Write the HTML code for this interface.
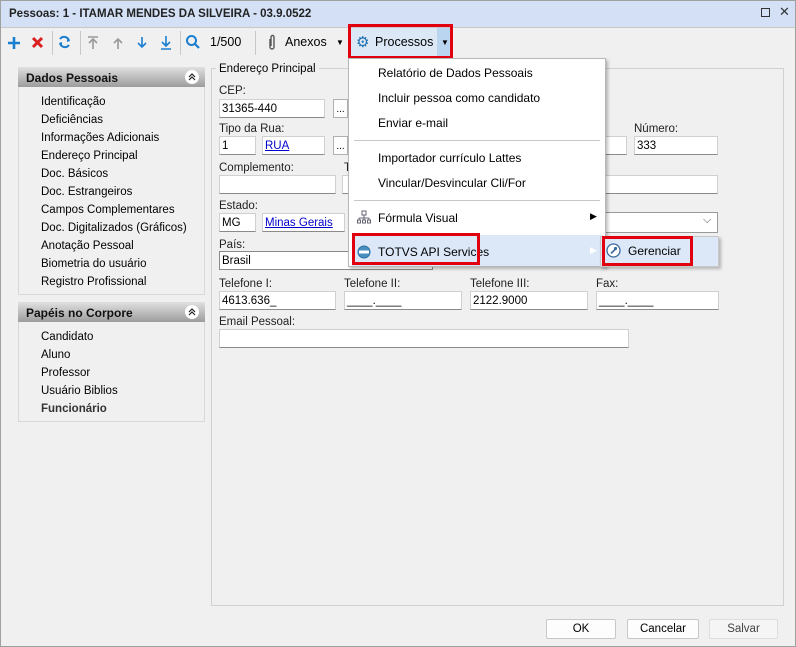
<!DOCTYPE html>
<html><head><meta charset="utf-8"><style>
*{box-sizing:border-box;margin:0;padding:0}
body{width:796px;height:647px;overflow:hidden;background:#f0f0f0;font-family:"Liberation Sans",sans-serif;font-size:11.5px;color:#000;position:relative}
.a{position:absolute}
.win{left:0;top:0;width:796px;height:647px;border:1px solid #a0a0a0}
.title{left:1px;top:1px;width:794px;height:26px;background:#d3e0f5;font-weight:bold;font-size:11.5px;color:#222;padding:7px 0 0 8px}
.inp{position:absolute;background:#fff;border:1px solid #d0d0d0;border-bottom:1px solid #8a8a8a;height:19px;padding:3px 0 0 2px;font-size:11.5px}
.lbl{position:absolute;font-size:11.5px;color:#222}
.btn3{position:absolute;width:15px;height:19px;border:1px solid #b0b0b0;background:#fdfdfd;font-size:10px;text-align:center;line-height:20px}
.ph{position:absolute;left:18px;width:187px;height:20px;background:linear-gradient(#e0e0e0,#9c9c9c);font-weight:bold;font-size:12px;padding:4px 0 0 8px;color:#111}
.ph svg{position:absolute;right:6px;top:3px}
.pb{position:absolute;left:18px;width:187px;border:1px solid #d8d8d8;border-top:none;background:#f0f0f0}
.pb div{height:18px;padding-left:22px;font-size:11.5px;line-height:18px}
.red{position:absolute;border:3px solid #e00010}
.mi{position:absolute;left:29px;font-size:12px}
.fbtn{position:absolute;top:619px;height:20px;border:1px solid #c8c8c8;border-radius:2px;background:#fdfdfd;text-align:center;line-height:19px;font-size:11.5px}
.sep{position:absolute;top:31px;width:1px;height:24px;background:#c8c8c8}
</style></head><body>
<div class="a win"></div>
<div class="a title">Pessoas: 1 - ITAMAR MENDES DA SILVEIRA - 03.9.0522</div>
<div class="a" style="left:761px;top:8px;width:9px;height:9px;border:1px solid #333"></div>
<div class="a" style="left:779px;top:4px;font-size:13px;color:#333">✕</div>
<div class="a" style="left:1px;top:27px;width:794px;height:1px;background:#c8c8c8"></div>
<svg class="a" style="left:0;top:28px" width="260" height="28">
<path d="M14 9v12M8 15h12" stroke="#1a7fd0" stroke-width="2.6"/>
<path d="M33 10l9 9M42 10l-9 9" stroke="#d92020" stroke-width="3"/>
<path d="M60 11a5 5 0 0 1 9 2M69 17a5 5 0 0 1-9-2" fill="none" stroke="#1a7fd0" stroke-width="2"/><path d="M67 10l3 3-3 1zM62 18l-3-3 3-1z" fill="#1a7fd0"/>
<path d="M88 9h10M93 11v10M89 15l4-4 4 4" fill="none" stroke="#999" stroke-width="1.6"/>
<path d="M118 11v10M114 15l4-4 4 4" fill="none" stroke="#999" stroke-width="1.6"/>
<path d="M142 9v10M138 15l4 4 4-4" fill="none" stroke="#1a7fd0" stroke-width="1.6"/>
<path d="M166 8v10M162 14l4 4 4-4M161 21h10" fill="none" stroke="#1a7fd0" stroke-width="1.6"/>
<circle cx="191.5" cy="12.5" r="4.5" fill="none" stroke="#1a7fd0" stroke-width="2"/><path d="M195 16l4 4" stroke="#1a7fd0" stroke-width="2.2"/>
</svg>
<div class="sep" style="left:52px"></div>
<div class="sep" style="left:80px"></div>
<div class="sep" style="left:180px"></div>
<div class="a" style="left:210px;top:35px;font-size:12.5px">1/500</div>
<div class="sep" style="left:255px"></div>
<svg class="a" style="left:267px;top:34px" width="10" height="17"><path d="M3 5v8a2 2 0 0 0 4 0V3a1.5 1.5 0 0 0-3 0v9" fill="none" stroke="#555" stroke-width="1.4"/></svg>
<div class="a" style="left:285px;top:35px;font-size:12.5px">Anexos</div>
<div class="a" style="left:336px;top:38px;font-size:8px">▼</div>
<div class="a" style="left:351px;top:28px;width:86px;height:28px;background:#dce8f6"></div>
<div class="a" style="left:437px;top:28px;width:13px;height:28px;background:#b9d5ef"></div>
<div class="a" style="left:356px;top:33px;color:#1a6fb0;font-size:15px">⚙</div>
<div class="a" style="left:375px;top:35px;font-size:12.5px">Processos</div>
<div class="a" style="left:441px;top:38px;font-size:8px">▼</div>
<div class="red" style="left:348px;top:24px;width:105px;height:35px"></div>
<div class="ph" style="top:67px">Dados Pessoais<svg width="14" height="14"><circle cx="7" cy="7" r="7" fill="#fff"/><path d="M4 7l3-3 3 3M4 10l3-3 3 3" fill="none" stroke="#222" stroke-width="1.2"/></svg></div>
<div class="pb" style="top:87px;height:208px;padding-top:6px"><div>Identificação</div><div>Deficiências</div><div>Informações Adicionais</div><div>Endereço Principal</div><div>Doc. Básicos</div><div>Doc. Estrangeiros</div><div>Campos Complementares</div><div>Doc. Digitalizados (Gráficos)</div><div>Anotação Pessoal</div><div>Biometria do usuário</div><div>Registro Profissional</div></div>
<div class="ph" style="top:302px">Papéis no Corpore<svg width="14" height="14"><circle cx="7" cy="7" r="7" fill="#fff"/><path d="M4 7l3-3 3 3M4 10l3-3 3 3" fill="none" stroke="#222" stroke-width="1.2"/></svg></div>
<div class="pb" style="top:322px;height:100px;padding-top:6px"><div>Candidato</div><div>Aluno</div><div>Professor</div><div>Usuário Biblios</div><div style="font-weight:bold;color:#333">Funcionário</div></div>
<div class="a" style="left:211px;top:68px;width:573px;height:538px;border:1px solid #d0d0d0"></div>
<div class="a" style="left:216px;top:63px;padding:0 3px;background:#f0f0f0;font-size:11.5px">Endereço Principal</div>
<div class="lbl" style="left:219px;top:85px">CEP:</div>
<div class="inp" style="left:219px;top:99px;width:106px">31365-440</div>
<div class="btn3" style="left:333px;top:99px">...</div>
<div class="lbl" style="left:219px;top:123px">Tipo da Rua:</div>
<div class="inp" style="left:219px;top:136px;width:37px">1</div>
<div class="inp" style="left:262px;top:136px;width:63px;color:#00c;text-decoration:underline">RUA</div>
<div class="btn3" style="left:333px;top:136px">...</div>
<div class="inp" style="left:600px;top:136px;width:27px"></div>
<div class="lbl" style="left:634px;top:123px">Número:</div>
<div class="inp" style="left:634px;top:136px;width:84px">333</div>
<div class="lbl" style="left:219px;top:162px">Complemento:</div>
<div class="inp" style="left:219px;top:175px;width:117px"></div>
<div class="inp" style="left:342px;top:175px;width:376px"></div>
<div class="lbl" style="left:344px;top:162px">T</div>
<div class="lbl" style="left:219px;top:200px">Estado:</div>
<div class="inp" style="left:219px;top:213px;width:37px">MG</div>
<div class="inp" style="left:262px;top:213px;width:83px;color:#00c;text-decoration:underline">Minas Gerais</div>
<div class="inp" style="left:350px;top:212px;width:368px;height:21px;border:1px solid #9a9a9a"></div>
<div class="a" style="left:703px;top:214px;font-size:11px;color:#444">⌵</div>
<div class="lbl" style="left:219px;top:239px">País:</div>
<div class="inp" style="left:219px;top:251px;width:214px;border:1px solid #8a8a8a">Brasil</div>
<div class="lbl" style="left:219px;top:278px">Telefone I:</div>
<div class="lbl" style="left:344px;top:278px">Telefone II:</div>
<div class="lbl" style="left:470px;top:278px">Telefone III:</div>
<div class="lbl" style="left:596px;top:278px">Fax:</div>
<div class="inp" style="left:219px;top:291px;width:117px">4613.636_</div>
<div class="inp" style="left:344px;top:291px;width:118px">____.____</div>
<div class="inp" style="left:470px;top:291px;width:118px">2122.9000</div>
<div class="inp" style="left:596px;top:291px;width:123px">____.____</div>
<div class="lbl" style="left:219px;top:316px">Email Pessoal:</div>
<div class="inp" style="left:219px;top:329px;width:410px"></div>
<div class="a" style="left:348px;top:58px;width:258px;height:209px;background:#fff;border:1px solid #b8b8b8;box-shadow:2px 2px 3px rgba(0,0,0,.25)">
 <div class="mi" style="top:7px">Relatório de Dados Pessoais</div>
 <div class="mi" style="top:32px">Incluir pessoa como candidato</div>
 <div class="mi" style="top:57px">Enviar e-mail</div>
 <div class="a" style="left:5px;top:81px;width:246px;height:1px;background:#c8c8c8"></div>
 <div class="mi" style="top:92px">Importador currículo Lattes</div>
 <div class="mi" style="top:117px">Vincular/Desvincular Cli/For</div>
 <div class="a" style="left:5px;top:141px;width:246px;height:1px;background:#c8c8c8"></div>
 <svg class="a" style="left:8px;top:151px" width="14" height="14"><rect x="5" y="1" width="4" height="4" fill="none" stroke="#667"/><path d="M7 5v3M2 8h10M2 8v2M7 8v2M12 8v2" stroke="#667" fill="none"/><rect x="0.5" y="10" width="3" height="3" fill="none" stroke="#667"/><rect x="5.5" y="10" width="3" height="3" fill="none" stroke="#667"/><rect x="10.5" y="10" width="3" height="3" fill="none" stroke="#667"/></svg>
 <div class="mi" style="top:152px">Fórmula Visual</div>
 <div class="a" style="left:241px;top:152px;font-size:9px">▶</div>
 <div class="a" style="left:3px;top:176px;width:251px;height:31px;background:#dce8f8"></div>
 <svg class="a" style="left:8px;top:186px" width="14" height="14"><circle cx="7" cy="7" r="6" fill="#4a8fbf" stroke="#2a6f9f"/><rect x="2" y="5.5" width="10" height="3" fill="#fff"/></svg>
 <div class="mi" style="top:186px">TOTVS API Services</div>
 <div class="a" style="left:241px;top:186px;font-size:9px;color:#fff">▶</div>
</div>
<div class="red" style="left:352px;top:233px;width:128px;height:32px"></div>
<div class="a" style="left:600px;top:236px;width:119px;height:31px;background:#dce8f8;border:1px solid #c8c8c8;box-shadow:2px 2px 3px rgba(0,0,0,.25)"></div>
<svg class="a" style="left:606px;top:243px" width="15" height="15"><circle cx="7.5" cy="7.5" r="6.5" fill="#fff" stroke="#3a6a9a" stroke-width="1.3"/><path d="M5 10.5l4-4" stroke="#3a6a9a" stroke-width="1.6"/><circle cx="9.5" cy="5.5" r="1.6" fill="#3a6a9a"/></svg>
<div class="a" style="left:628px;top:244px;font-size:12px">Gerenciar</div>
<div class="red" style="left:602px;top:236px;width:91px;height:30px"></div>
<div class="fbtn" style="left:546px;width:70px">OK</div>
<div class="fbtn" style="left:627px;width:72px">Cancelar</div>
<div class="fbtn" style="left:709px;width:69px;color:#444;border-color:#ddd;background:#f5f5f5">Salvar</div>
</body></html>
